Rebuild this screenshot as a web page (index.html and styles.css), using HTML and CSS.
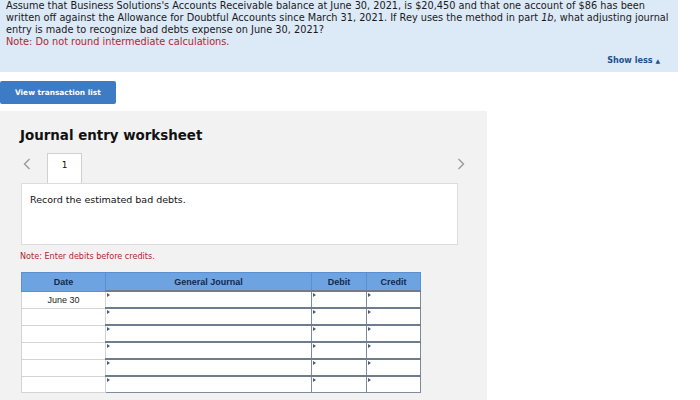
FILE: index.html
```html
<!DOCTYPE html>
<html>
<head>
<meta charset="utf-8">
<link rel="stylesheet" href="styles.css">
</head>
<body>
<div class="prompt">
  <p class="question">Assume that Business Solutions's Accounts Receivable balance at June 30, 2021, is $20,450 and that one account of $86 has been<br>written off against the Allowance for Doubtful Accounts since March 31, 2021. If Rey uses the method in part <i>1b</i>, what adjusting journal<br>entry is made to recognize bad debts expense on June 30, 2021?</p>
  <p class="note-red">Note: Do not round intermediate calculations.</p>
  <div class="show-less">Show less <span class="tri">▲</span></div>
</div>
<div class="actions">
  <button class="btn">View transaction list</button>
</div>
<div class="panel">
  <h2 class="title">Journal entry worksheet</h2>
  <div class="tabs">
    <svg class="chev prev" width="8" height="12" viewBox="0 0 8 12"><polyline points="6.5,1 1.5,6 6.5,11" fill="none" stroke="#9a9a9a" stroke-width="1.4"/></svg>
    <div class="tab">1</div>
    <div class="spacer"></div>
    <svg class="chev next" width="8" height="12" viewBox="0 0 8 12"><polyline points="1.5,1 6.5,6 1.5,11" fill="none" stroke="#9a9a9a" stroke-width="1.4"/></svg>
  </div>
  <div class="record">Record the estimated bad debts.</div>
  <div class="note-small">Note: Enter debits before credits.</div>
  <table class="journal">
    <thead>
      <tr><th class="c-date">Date</th><th class="c-gj">General Journal</th><th class="c-dr">Debit</th><th class="c-cr">Credit</th></tr>
    </thead>
    <tbody>
      <tr><td class="date">June 30</td><td class="inp"></td><td class="inp"></td><td class="inp"></td></tr>
      <tr><td class="date"></td><td class="inp"></td><td class="inp"></td><td class="inp"></td></tr>
      <tr><td class="date"></td><td class="inp"></td><td class="inp"></td><td class="inp"></td></tr>
      <tr><td class="date"></td><td class="inp"></td><td class="inp"></td><td class="inp"></td></tr>
      <tr><td class="date"></td><td class="inp"></td><td class="inp"></td><td class="inp"></td></tr>
      <tr><td class="date"></td><td class="inp"></td><td class="inp"></td><td class="inp"></td></tr>
    </tbody>
  </table>
</div>
</body>
</html>
```
FILE: styles.css
```css
html, body {
  margin: 0;
  padding: 0;
  background: #ffffff;
  font-family: "DejaVu Sans", Verdana, sans-serif;
  color: #1a1a1a;
}
.prompt {
  width: 672px;
  height: 72px;
  padding: 0 0 0 6px;
  background: #dce9f7;
  font-size: 9.75px;
  line-height: 12px;
}
.question {
  margin: 0;
  padding-top: 0;
  white-space: nowrap;
}
.note-red {
  margin: 0;
  color: #b3262f;
}
.show-less {
  margin-top: 7px;
  padding-right: 18px;
  text-align: right;
  font-size: 8.1px;
  line-height: 10px;
  font-weight: bold;
  color: #1e4f8e;
}
.show-less .tri {
  font-size: 6px;
}
.actions {
  padding-top: 9px;
  height: 23px;
  padding-bottom: 7px;
}
.btn {
  display: block;
  width: 116px;
  height: 23px;
  margin: 0;
  padding: 0 0 0 15px;
  border: none;
  border-radius: 2px;
  background: #3d7bc4;
  color: #ffffff;
  font-family: "DejaVu Sans", Verdana, sans-serif;
  font-weight: bold;
  font-size: 7.4px;
  text-align: left;
}
.panel {
  width: 467px;
  height: 272px;
  padding: 17px 0 0 20px;
  background: #f2f2f2;
}
.title {
  margin: 0;
  font-size: 13.4px;
  line-height: 16px;
  font-weight: bold;
  color: #111111;
}
.tabs {
  display: flex;
  align-items: flex-start;
  width: 445px;
  height: 30px;
  margin-top: 9px;
}
.chev {
  display: block;
  margin-top: 5px;
}
.prev {
  margin-left: 3px;
}
.tab {
  margin-left: 16px;
  width: 35px;
  height: 30px;
  box-sizing: border-box;
  background: #ffffff;
  border: 1px solid #d0d0d0;
  border-bottom: none;
  text-align: center;
  font-size: 9px;
  line-height: 22px;
  color: #111111;
  position: relative;
  z-index: 1;
  margin-bottom: -1px;
}
.spacer {
  flex: 1;
}
.record {
  margin-left: 1px;
  width: 437px;
  height: 62px;
  box-sizing: border-box;
  background: #ffffff;
  border: 1px solid #dcdcdc;
  padding: 10px 0 0 8px;
  font-size: 9.5px;
  line-height: 12px;
  color: #111111;
}
.note-small {
  margin-top: 6px;
  font-size: 8.1px;
  line-height: 10px;
  color: #b3262f;
}
.journal {
  margin-top: 11px;
  margin-left: 1px;
  border-collapse: collapse;
  table-layout: fixed;
  font-family: "Liberation Sans", Arial, sans-serif;
}
.journal th {
  height: 17px;
  padding: 0;
  background: #6ea3e2;
  border: 1px solid #5a8fd2;
  color: #14294a;
  font-size: 9px;
  font-weight: bold;
  text-align: center;
}
.c-date { width: 83px; }
.c-gj { width: 205px; }
.c-dr { width: 54px; }
.c-cr { width: 53px; }
.journal td {
  height: 15px;
  padding: 0;
  background: #ffffff;
}
.journal td.date {
  border: 1px solid #d4d4d4;
  text-align: center;
  font-size: 9px;
  color: #222222;
}
.journal td.inp {
  border: 1px solid #7f8b9c;
  border-top: 2px solid #6f7c8e;
  position: relative;
}
.journal td.inp::before {
  content: "";
  position: absolute;
  left: 1px;
  top: 1px;
  width: 0;
  height: 0;
  border-top: 2px solid transparent;
  border-bottom: 2px solid transparent;
  border-left: 3px solid #4a5b70;
}
```
